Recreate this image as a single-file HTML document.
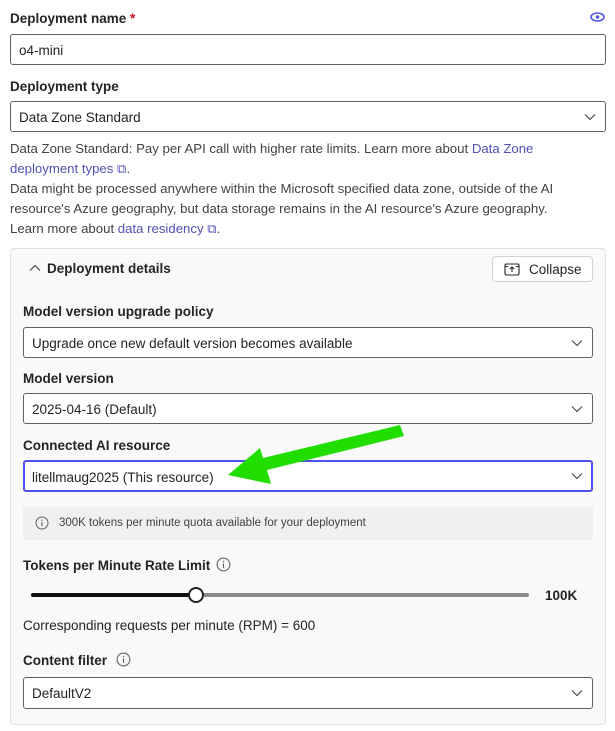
<!DOCTYPE html>
<html><head><meta charset="utf-8"><style>
*{box-sizing:border-box;margin:0;padding:0}
body{width:615px;height:731px;background:#fff;font-family:"Liberation Sans",sans-serif;font-size:13.5px;color:#242424;position:relative;overflow:hidden}
.a{position:absolute;white-space:nowrap}
.lbl{font-weight:bold;font-size:13.5px;color:#242424}
.box{position:absolute;background:#fff;border:1px solid #616161;border-radius:3px}
.box span{position:absolute;left:8px;top:8px;font-size:13.5px}
.chev{position:absolute;right:9px;top:11px}
.help{color:#424242;font-size:13.2px}
a{color:#4f52b2;text-decoration:none}
</style></head><body>
<div class="a lbl" style="left:10px;top:11px">Deployment name<span style="color:#c50f1f"> *</span></div>
<svg class="a" style="left:590px;top:11px" width="15" height="12" viewBox="0 0 15 12"><ellipse cx="7.5" cy="6" rx="6.5" ry="4" fill="none" stroke="#4f52ee" stroke-width="1.6"/><circle cx="7.5" cy="6" r="1.8" fill="#4f52ee"/></svg>
<div class="box" style="left:10px;top:34px;width:596px;height:31px"><span>o4-mini</span></div>
<div class="a lbl" style="left:10px;top:79px">Deployment type</div>
<div class="box" style="left:10px;top:101px;width:596px;height:31px"><span>Data Zone Standard</span>
<svg class="chev" width="12" height="8" viewBox="0 0 12 8"><path d="M1 1.5l5 5 5-5" fill="none" stroke="#424242" stroke-width="1.1"/></svg></div>
<div class="a help" style="left:10px;top:139px;line-height:20px">Data Zone Standard: Pay per API call with higher rate limits. Learn more about <a>Data Zone</a><br><a>deployment types ⧉</a>.<br>Data might be processed anywhere within the Microsoft specified data zone, outside of the AI<br>resource's Azure geography, but data storage remains in the AI resource's Azure geography.<br>Learn more about <a>data residency ⧉</a>.</div>

<div class="a" style="left:10px;top:248px;width:596px;height:477px;background:#f9f9f9;border:1px solid #e0e0e0;border-radius:4px"></div>
<svg class="a" style="left:29px;top:264px" width="12" height="8" viewBox="0 0 12 8"><path d="M1 6.5l5-5 5 5" fill="none" stroke="#424242" stroke-width="1.1"/></svg>
<div class="a lbl" style="left:47px;top:261px">Deployment details</div>
<div class="a" style="left:492px;top:256px;width:101px;height:26px;background:#fff;border:1px solid #d1d1d1;border-radius:4px"></div>
<svg class="a" style="left:504px;top:263px" width="16" height="13" viewBox="0 0 16 13"><rect x="1" y="1" width="14" height="11" rx="1.5" fill="none" stroke="#242424" stroke-width="1.1"/><path d="M8 9V4M6 6l2-2 2 2M1 3.5h3M12 3.5h3" fill="none" stroke="#242424" stroke-width="1.1"/></svg>
<div class="a" style="left:529px;top:262px;font-size:13.5px">Collapse</div>

<div class="a lbl" style="left:23px;top:304px">Model version upgrade policy</div>
<div class="box" style="left:23px;top:327px;width:570px;height:31px"><span>Upgrade once new default version becomes available</span>
<svg class="chev" width="12" height="8" viewBox="0 0 12 8"><path d="M1 1.5l5 5 5-5" fill="none" stroke="#424242" stroke-width="1.1"/></svg></div>
<div class="a lbl" style="left:23px;top:371px">Model version</div>
<div class="box" style="left:23px;top:393px;width:570px;height:31px"><span>2025-04-16 (Default)</span>
<svg class="chev" width="12" height="8" viewBox="0 0 12 8"><path d="M1 1.5l5 5 5-5" fill="none" stroke="#424242" stroke-width="1.1"/></svg></div>
<div class="a lbl" style="left:23px;top:438px">Connected AI resource</div>
<div class="box" style="left:23px;top:460px;width:570px;height:32px;border:2px solid #4f52ee"><span style="left:7px;top:8px">litellmaug2025 (This resource)</span>
<svg class="chev" style="right:8px;top:10px" width="12" height="8" viewBox="0 0 12 8"><path d="M1 1.5l5 5 5-5" fill="none" stroke="#424242" stroke-width="1.1"/></svg></div>
<div class="a" style="left:23px;top:507px;width:570px;height:33px;background:#f0f0f0"></div>
<svg class="a" style="left:35px;top:516px" width="14" height="14" viewBox="0 0 14 14"><circle cx="7" cy="7" r="6" fill="none" stroke="#616161"/><path d="M7 6v4.2" stroke="#616161" stroke-width="1.1"/><circle cx="7" cy="4.2" r=".7" fill="#616161"/></svg>
<div class="a" style="left:59px;top:517px;font-size:11.5px;color:#424242">300K tokens per minute quota available for your deployment</div>

<div class="a lbl" style="left:23px;top:558px">Tokens per Minute Rate Limit</div>
<svg class="a" style="left:216px;top:557px" width="15" height="15" viewBox="0 0 14 14"><circle cx="7" cy="7" r="6" fill="none" stroke="#616161"/><path d="M7 6v4.2" stroke="#616161" stroke-width="1.1"/><circle cx="7" cy="4.2" r=".7" fill="#616161"/></svg>
<div class="a" style="left:31px;top:593px;width:498px;height:4px;background:#8a8a8a;border-radius:2px"></div>
<div class="a" style="left:31px;top:593px;width:165px;height:4px;background:#111;border-radius:2px"></div>
<div class="a" style="left:188px;top:587px;width:16px;height:16px;border-radius:50%;background:#fff;border:2px solid #222"></div>
<div class="a lbl" style="left:545px;top:588px">100K</div>
<div class="a" style="left:23px;top:618px">Corresponding requests per minute (RPM) = 600</div>
<div class="a lbl" style="left:23px;top:653px">Content filter</div>
<svg class="a" style="left:116px;top:652px" width="15" height="15" viewBox="0 0 14 14"><circle cx="7" cy="7" r="6" fill="none" stroke="#616161"/><path d="M7 6v4.2" stroke="#616161" stroke-width="1.1"/><circle cx="7" cy="4.2" r=".7" fill="#616161"/></svg>
<div class="box" style="left:23px;top:677px;width:570px;height:32px"><span>DefaultV2</span>
<svg class="chev" width="12" height="8" viewBox="0 0 12 8"><path d="M1 1.5l5 5 5-5" fill="none" stroke="#424242" stroke-width="1.1"/></svg></div>

<svg class="a" style="left:0;top:0" width="615" height="731"><polygon points="228,475 260,448 263,458 400,425 404,436 267,470 271,484" fill="#22dd00"/></svg>
</body></html>
